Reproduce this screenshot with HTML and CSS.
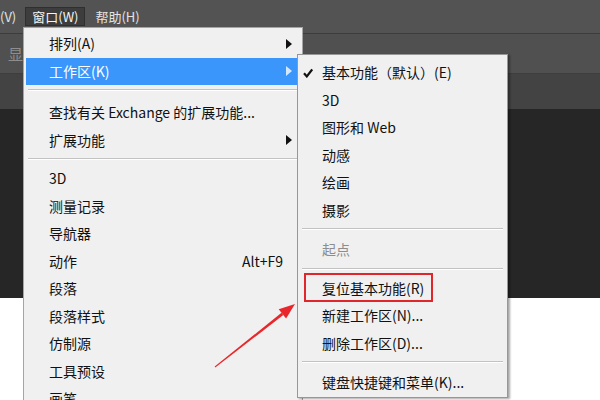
FILE: index.html
```html
<!DOCTYPE html>
<html lang="zh-CN">
<head>
    <meta charset="UTF-8">
    <meta name="viewport" content="width=device-width, initial-scale=1.0">
    <title>窗口 - 工作区</title>
    <link rel="stylesheet" href="styles.css">
</head>
<body>
    <div class="app">
        <div class="menubar">
            <span class="mb-item first">(V)</span>
            <span class="mb-item active">窗口(W)</span>
            <span class="mb-item">帮助(H)</span>
        </div>
        <div class="optbar"><span class="opt-label">显示</span></div>
        <div class="tabbar"></div>
        <div class="canvas"></div>
        <div class="page"></div>

        <div class="menu main-menu">
            <div class="item"><span></span><span>排列(A)</span><span class="tri"></span></div>
            <div class="item hl"><span></span><span>工作区(K)</span><span class="tri"></span></div>
            <div class="sep sep-lg"></div>
            <div class="item"><span></span><span>查找有关 Exchange 的扩展功能...</span><span></span></div>
            <div class="item"><span></span><span>扩展功能</span><span class="tri"></span></div>
            <div class="sep sep-sm"></div>
            <div class="item"><span></span><span>3D</span><span></span></div>
            <div class="item"><span></span><span>测量记录</span><span></span></div>
            <div class="item"><span></span><span>导航器</span><span></span></div>
            <div class="item"><span></span><span>动作</span><span class="key">Alt+F9</span></div>
            <div class="item"><span></span><span>段落</span><span></span></div>
            <div class="item"><span></span><span>段落样式</span><span></span></div>
            <div class="item"><span></span><span>仿制源</span><span></span></div>
            <div class="item"><span></span><span>工具预设</span><span></span></div>
            <div class="item"><span></span><span>画笔</span><span></span></div>
            <div class="item"><span></span><span>画笔预设</span><span></span></div>
        </div>

        <div class="menu sub-menu">
            <div class="item">
                <span class="check">
                    <svg width="10" height="10" viewBox="0 0 10 10"><path d="M1 5.2 L3.8 8.4 L9.2 1.4" fill="none" stroke="#111" stroke-width="2.2"/></svg>
                </span>
                <span>基本功能（默认）(E)</span><span></span>
            </div>
            <div class="item"><span></span><span>3D</span><span></span></div>
            <div class="item"><span></span><span>图形和 Web</span><span></span></div>
            <div class="item"><span></span><span>动感</span><span></span></div>
            <div class="item"><span></span><span>绘画</span><span></span></div>
            <div class="item"><span></span><span>摄影</span><span></span></div>
            <div class="sep"></div>
            <div class="item disabled"><span></span><span>起点</span><span></span></div>
            <div class="sep sep-sm"></div>
            <div class="item"><span></span><span>复位基本功能(R)</span><span></span></div>
            <div class="item"><span></span><span>新建工作区(N)...</span><span></span></div>
            <div class="item"><span></span><span>删除工作区(D)...</span><span></span></div>
            <div class="sep"></div>
            <div class="item"><span></span><span>键盘快捷键和菜单(K)...</span><span></span></div>
        </div>

        <div class="mark-box"></div>
        <svg class="mark-arrow" width="100" height="80" viewBox="200 295 100 80">
            <polygon points="215.3,367.4 214.7,366.6 281.5,312.7 283.3,315.1" fill="#e8262b"/>
            <polygon points="295,304 278.7,309.2 286.1,318.6" fill="#e8262b"/>
        </svg>
    </div>
</body>
</html>
```

FILE: styles.css
```css
body {
    margin: 0;
    background-color: white;
    font-family: "Noto Sans CJK SC", "Noto Sans", sans-serif;
}

.app {
    position: relative;
    width: 600px;
    height: 400px;
    overflow: hidden;
}

.menubar {
    height: 33px;
    background-color: #535353;
    border-bottom: 1px solid #3c3c3c;
    display: flex;
    align-items: center;
    font-size: 13px;
    color: #e4e4e4;
}

.mb-item {
    padding: 0 7px 0 10px;
    line-height: 17px;
}

.mb-item.first {
    padding: 0 9px 0 0;
}

.mb-item.active {
    padding: 0 6px;
    background-color: #3d3d3d;
    border: 1px solid #2f2f2f;
    color: #f4f4f4;
}

.optbar {
    height: 39px;
    background-color: #505050;
    border-bottom: 1px solid #3e3e3e;
    display: flex;
    align-items: center;
}

.opt-label {
    padding-left: 8px;
    font-size: 15px;
    color: #8e8e8e;
}

.tabbar {
    height: 35px;
    background-color: #434343;
}

.canvas {
    height: 189px;
    background-color: #262626;
}

.page {
    height: 102px;
    background-color: white;
}

.menu {
    position: absolute;
    background-color: #f0f0f0;
    border: 1px solid #a5a5a5;
    font-size: 14px;
    color: #111;
}

.main-menu {
    left: 23px;
    top: 27px;
    width: 274px;
    padding: 2px 2px 0;
}

.sub-menu {
    left: 297px;
    top: 54px;
    width: 205px;
    padding: 4px 2px 0;
    border-color: #979797;
    box-shadow: 2px 1px 2px rgba(0, 0, 0, 0.35);
}

.item {
    display: grid;
    grid-template-columns: 23px 1fr auto;
    align-items: center;
    height: 27.5px;
    line-height: 27.5px;
    white-space: nowrap;
}

.sub-menu .item {
    grid-template-columns: 22px 1fr auto;
}

.item.hl {
    background-color: #3a96fb;
    color: white;
}

.item.disabled {
    color: #8d8d8d;
}

.check {
    display: flex;
    padding-left: 3px;
}

.tri {
    width: 0;
    height: 0;
    margin-right: 8px;
    border-left: 6px solid #111;
    border-top: 5px solid transparent;
    border-bottom: 5px solid transparent;
}

.item.hl .tri {
    border-left-color: #d2e8ff;
}

.key {
    margin-right: 17px;
}

.sep {
    margin: 4px 2px 6px;
    border-top: 1px solid #c2c2c2;
    border-bottom: 1px solid white;
}

.sep-lg {
    margin-bottom: 8px;
}

.sep-sm {
    margin-bottom: 5px;
}

.mark-box {
    position: absolute;
    left: 304px;
    top: 273px;
    width: 125px;
    height: 25px;
    border: 2px solid #e0262b;
}

.mark-arrow {
    position: absolute;
    left: 200px;
    top: 295px;
}
```
